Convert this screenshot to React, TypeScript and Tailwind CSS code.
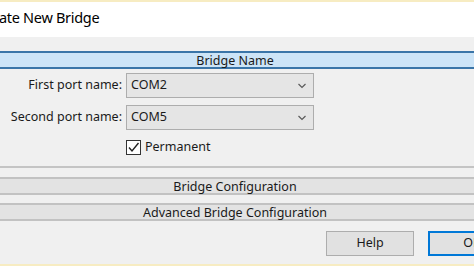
import React from "react";

function Chevron() {
  return (
    <svg width="10" height="6" viewBox="0 0 10 6" className="text-[#5a5a5a]">
      <path d="M1.5 1 L5 4.5 L8.5 1" fill="none" stroke="currentColor" strokeWidth="1.2" />
    </svg>
  );
}

function Combo({ value }: { value: string }) {
  return (
    <div className="flex h-[25px] w-[188px] items-center justify-between border border-[#adadad] bg-[#e5e5e5] pl-[4px] pr-[6px]">
      <span>{value}</span>
      <Chevron />
    </div>
  );
}

function SectionBar({ title, active }: { title: string; active?: boolean }) {
  return (
    <div
      className={`flex h-[18px] shrink-0 items-center justify-center border-y-2 leading-none ${
        active ? "border-[#3a75a8] bg-[#cce4f7]" : "border-[#c2c2c2] bg-[#e3e3e3]"
      }`}
    >
      <span className="mt-[3px] pr-[4px]">{title}</span>
    </div>
  );
}

export default function App() {
  return (
    <div
      className="flex h-[266px] w-[474px] flex-col overflow-hidden bg-[#f0f0f0] text-[12.5px] text-[#1a1a1a]"
      style={{ fontFamily: "'Noto Sans', 'Open Sans', sans-serif" }}
    >
      <div className="h-[2px] shrink-0 bg-[#f7ecc2]" />

      {/* title bar, clipped on the left */}
      <div className="flex h-[35px] shrink-0 items-center bg-white pb-[3px] text-[14.5px] tracking-[-0.3px] text-black">
        <span className="-ml-[1px]">ate New Bridge</span>
      </div>

      <div className="flex flex-1 flex-col pt-[14px]">
        <SectionBar title="Bridge Name" active />

        <div className="mt-[4px] grid grid-cols-[122px_188px] items-center gap-x-[4px] gap-y-[7px] whitespace-nowrap">
          <span className="text-right">First port name:</span>
          <Combo value="COM2" />
          <span className="text-right">Second port name:</span>
          <Combo value="COM5" />
          <span />
          <label className="mt-[1px] flex items-center gap-[4px]">
            <span className="flex h-[15px] w-[15px] items-center justify-center border border-[#333] bg-white">
              <svg width="13" height="13" viewBox="0 0 13 13">
                <path d="M2 6.5 L5 10 L11.5 2" fill="none" stroke="#222" strokeWidth="1.4" />
              </svg>
            </span>
            <span>Permanent</span>
          </label>
        </div>

        <div className="mt-[9px] h-[2px] shrink-0 bg-[#c4c4c4]" />

        <div className="mt-[9px]">
          <SectionBar title="Bridge Configuration" />
        </div>
        <div className="mt-[8px]">
          <SectionBar title="Advanced Bridge Configuration" />
        </div>

        <div className="mt-[10px] flex shrink-0 gap-[14px] pl-[326px]">
          <button className="h-[25px] w-[88px] shrink-0 border border-[#adadad] bg-[#e1e1e1]">Help</button>
          <button className="h-[25px] w-[88px] shrink-0 border-2 border-[#0078d7] bg-[#e1e1e1]">OK</button>
        </div>
      </div>

      <div className="h-[2px] shrink-0 bg-[#f7ecc2]" />
    </div>
  );
}
